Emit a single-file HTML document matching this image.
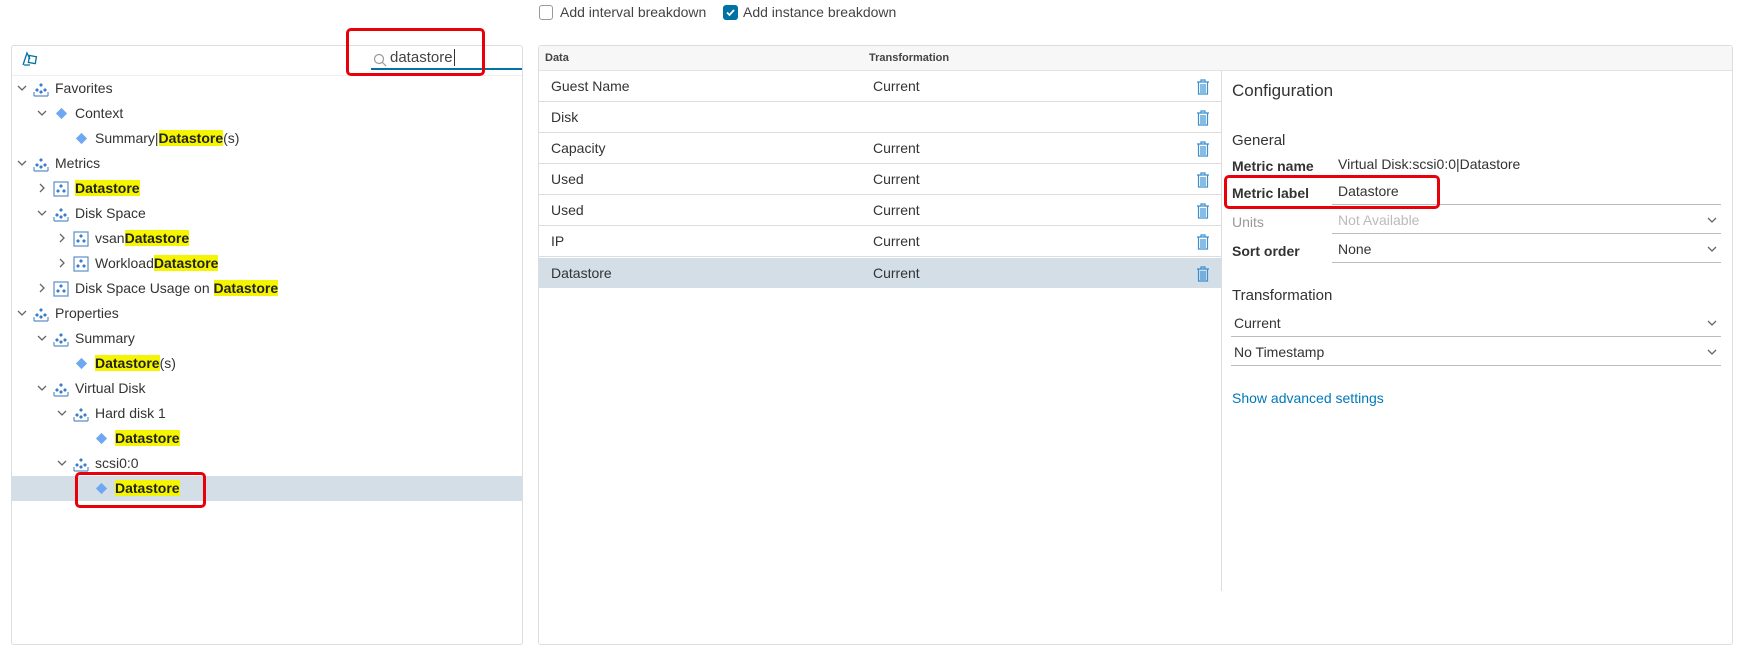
<!DOCTYPE html>
<html><head><meta charset="utf-8"><style>
*{margin:0;padding:0;box-sizing:border-box}
body{width:1747px;height:569px;background:#fff;font-family:"Liberation Sans",sans-serif;color:#333;font-size:14px;position:relative;overflow:hidden}
.a{position:absolute;white-space:nowrap}
.hl{background:#f5f500;font-weight:bold;color:#222}
.row{position:absolute;left:0;height:25px;line-height:25px;width:100%}
.chev{position:absolute;top:7px;width:10px;height:10px}
.ico{position:absolute;top:5px}
.red{position:absolute;border:3px solid #e8000b;border-radius:5px}
.trow{position:absolute;left:539px;width:682px;height:31px;border-bottom:1px solid #ddd;line-height:30px}
.trow span{position:absolute}
.lbl{position:absolute;font-weight:bold;font-size:14px;color:#333}
.und{position:absolute;border-bottom:1px solid #bbb;height:26px;line-height:24px;font-size:14px}
.dd{position:absolute;right:4px;top:7px}
</style></head><body>

<div class="a" style="left:539px;top:5px;width:14px;height:15px;border:1px solid #999;border-radius:3px"></div>
<div class="a" style="left:560px;top:4px;font-size:14px;color:#444">Add interval breakdown</div>
<div class="a" style="left:723px;top:5px;width:15px;height:15px;background:#0072a3;border-radius:3px"><svg width="15" height="15"><path d="M4 7.5l2.5 2.5 4.5-5" stroke="#fff" stroke-width="1.8" fill="none"/></svg></div>
<div class="a" style="left:743px;top:4px;font-size:14px;color:#444">Add instance breakdown</div>

<div class="a" style="left:11px;top:45px;width:512px;height:600px;border:1px solid #ddd;border-radius:3px"></div>
<div class="a" style="left:12px;top:75px;width:510px;height:1px;background:#eee"></div>
<svg class="a" style="left:21px;top:51px" width="17" height="16"><path d="M2 14 L6 2 L9 8 M3 14h6" stroke="#0072a3" stroke-width="1.3" fill="none"/><rect x="8" y="5" width="7" height="7" stroke="#0072a3" stroke-width="1.3" fill="none" transform="rotate(10 11 8)"/></svg>
<svg class="a" style="left:373px;top:53px" width="14" height="14"><circle cx="6" cy="6" r="4.5" stroke="#999" fill="none" stroke-width="1.2"/><path d="M9.5 9.5l3.5 3.5" stroke="#999" stroke-width="1.2"/></svg>
<div class="a" style="left:390px;top:49px;font-size:15px;color:#444">datastore<span style="border-left:1px solid #333;margin-left:1px"></span></div>
<div class="a" style="left:371px;top:68px;width:151px;height:2px;background:#0072a3"></div>
<div class="red" style="left:346px;top:28px;width:139px;height:48px"></div>

<div class="a" style="left:12px;top:476px;width:510px;height:25px;background:#d3dee7"></div>

<svg width="0" height="0" style="position:absolute"><defs>
<symbol id="h" viewBox="0 0 16 16"><path d="M1 15h14M1 11v4M15 11v4" stroke="#5a8fc8" stroke-width="1.2" fill="none"/><path d="M8 2l2 2-2 2-2-2z M4 7l2 2-2 2-2-2z M12 7l2 2-2 2-2-2z M8 9l2 2-2 2-2-2z" fill="#3a7dd0"/></symbol>
<symbol id="b" viewBox="0 0 16 16"><rect x="1" y="1" width="14" height="14" stroke="#5a8fc8" stroke-width="1.2" fill="#fff"/><path d="M8 3l2 2-2 2-2-2z M5 8l2 2-2 2-2-2z M11 8l2 2-2 2-2-2z" fill="#3a7dd0"/></symbol>
<symbol id="d" viewBox="0 0 14 14"><path d="M7 1l6 6-6 6-6-6z" fill="#6ea8f2"/></symbol>
<symbol id="cd" viewBox="0 0 10 10"><path d="M1 3l4 4 4-4" stroke="#666" stroke-width="1.3" fill="none"/></symbol>
<symbol id="cr" viewBox="0 0 10 10"><path d="M3 1l4 4-4 4" stroke="#666" stroke-width="1.3" fill="none"/></symbol>
<symbol id="t" viewBox="0 0 14 16"><path d="M1 3h12M5 3V1h4v2M2.5 3v12h9V3M5 5v9M7 5v9M9 5v9" stroke="#3b8fd0" stroke-width="1.2" fill="none"/></symbol>
</defs></svg>

<div class="a" style="left:0;top:76px;width:520px">
 <div class="row" style="top:0"><svg class="chev" style="left:17px"><use href="#cd"/></svg><svg class="ico" style="left:33px" width="16" height="16"><use href="#h"/></svg><span class="a" style="left:55px">Favorites</span></div>
 <div class="row" style="top:25px"><svg class="chev" style="left:37px"><use href="#cd"/></svg><svg class="ico" style="left:55px;top:6px" width="13" height="13"><use href="#d"/></svg><span class="a" style="left:75px">Context</span></div>
 <div class="row" style="top:50px"><svg class="ico" style="left:75px;top:6px" width="13" height="13"><use href="#d"/></svg><span class="a" style="left:95px">Summary|<span class="hl">Datastore</span>(s)</span></div>
 <div class="row" style="top:75px"><svg class="chev" style="left:17px"><use href="#cd"/></svg><svg class="ico" style="left:33px" width="16" height="16"><use href="#h"/></svg><span class="a" style="left:55px">Metrics</span></div>
 <div class="row" style="top:100px"><svg class="chev" style="left:37px"><use href="#cr"/></svg><svg class="ico" style="left:53px" width="16" height="16"><use href="#b"/></svg><span class="a" style="left:75px"><span class="hl">Datastore</span></span></div>
 <div class="row" style="top:125px"><svg class="chev" style="left:37px"><use href="#cd"/></svg><svg class="ico" style="left:53px" width="16" height="16"><use href="#h"/></svg><span class="a" style="left:75px">Disk Space</span></div>
 <div class="row" style="top:150px"><svg class="chev" style="left:57px"><use href="#cr"/></svg><svg class="ico" style="left:73px" width="16" height="16"><use href="#b"/></svg><span class="a" style="left:95px">vsan<span class="hl">Datastore</span></span></div>
 <div class="row" style="top:175px"><svg class="chev" style="left:57px"><use href="#cr"/></svg><svg class="ico" style="left:73px" width="16" height="16"><use href="#b"/></svg><span class="a" style="left:95px">Workload<span class="hl">Datastore</span></span></div>
 <div class="row" style="top:200px"><svg class="chev" style="left:37px"><use href="#cr"/></svg><svg class="ico" style="left:53px" width="16" height="16"><use href="#b"/></svg><span class="a" style="left:75px">Disk Space Usage on <span class="hl">Datastore</span></span></div>
 <div class="row" style="top:225px"><svg class="chev" style="left:17px"><use href="#cd"/></svg><svg class="ico" style="left:33px" width="16" height="16"><use href="#h"/></svg><span class="a" style="left:55px">Properties</span></div>
 <div class="row" style="top:250px"><svg class="chev" style="left:37px"><use href="#cd"/></svg><svg class="ico" style="left:53px" width="16" height="16"><use href="#h"/></svg><span class="a" style="left:75px">Summary</span></div>
 <div class="row" style="top:275px"><svg class="ico" style="left:75px;top:6px" width="13" height="13"><use href="#d"/></svg><span class="a" style="left:95px"><span class="hl">Datastore</span>(s)</span></div>
 <div class="row" style="top:300px"><svg class="chev" style="left:37px"><use href="#cd"/></svg><svg class="ico" style="left:53px" width="16" height="16"><use href="#h"/></svg><span class="a" style="left:75px">Virtual Disk</span></div>
 <div class="row" style="top:325px"><svg class="chev" style="left:57px"><use href="#cd"/></svg><svg class="ico" style="left:73px" width="16" height="16"><use href="#h"/></svg><span class="a" style="left:95px">Hard disk 1</span></div>
 <div class="row" style="top:350px"><svg class="ico" style="left:95px;top:6px" width="13" height="13"><use href="#d"/></svg><span class="a" style="left:115px"><span class="hl">Datastore</span></span></div>
 <div class="row" style="top:375px"><svg class="chev" style="left:57px"><use href="#cd"/></svg><svg class="ico" style="left:73px" width="16" height="16"><use href="#h"/></svg><span class="a" style="left:95px">scsi0:0</span></div>
 <div class="row" style="top:400px"><svg class="ico" style="left:95px;top:6px" width="13" height="13"><use href="#d"/></svg><span class="a" style="left:115px"><span class="hl">Datastore</span></span></div>
</div>
<div class="red" style="left:75px;top:472px;width:131px;height:36px"></div>

<div class="a" style="left:538px;top:45px;width:1195px;height:600px;border:1px solid #ddd;border-radius:3px"></div>
<div class="a" style="left:539px;top:46px;width:1193px;height:25px;background:#f7f7f7;border-bottom:1px solid #e3e3e3"></div>
<div class="a" style="left:545px;top:52px;font-size:11px;font-weight:bold;color:#444">Data</div>
<div class="a" style="left:869px;top:52px;font-size:11px;font-weight:bold;color:#444">Transformation</div>
<div class="a" style="left:1221px;top:71px;width:1px;height:520px;background:#ddd"></div>

<div class="trow" style="top:71px"><span style="left:12px">Guest Name</span><span style="left:334px">Current</span><svg style="position:absolute;left:657px;top:8px" width="14" height="16"><use href="#t"/></svg></div>
<div class="trow" style="top:102px"><span style="left:12px">Disk</span><svg style="position:absolute;left:657px;top:8px" width="14" height="16"><use href="#t"/></svg></div>
<div class="trow" style="top:133px"><span style="left:12px">Capacity</span><span style="left:334px">Current</span><svg style="position:absolute;left:657px;top:8px" width="14" height="16"><use href="#t"/></svg></div>
<div class="trow" style="top:164px"><span style="left:12px">Used</span><span style="left:334px">Current</span><svg style="position:absolute;left:657px;top:8px" width="14" height="16"><use href="#t"/></svg></div>
<div class="trow" style="top:195px"><span style="left:12px">Used</span><span style="left:334px">Current</span><svg style="position:absolute;left:657px;top:8px" width="14" height="16"><use href="#t"/></svg></div>
<div class="trow" style="top:226px"><span style="left:12px">IP</span><span style="left:334px">Current</span><svg style="position:absolute;left:657px;top:8px" width="14" height="16"><use href="#t"/></svg></div>
<div class="trow" style="top:258px;background:#d3dee7;border-bottom:none;height:30px"><span style="left:12px">Datastore</span><span style="left:334px">Current</span><svg style="position:absolute;left:657px;top:8px" width="14" height="16"><use href="#t"/></svg></div>

<div class="a" style="left:1232px;top:81px;font-size:17px;color:#333">Configuration</div>
<div class="a" style="left:1232px;top:132px;font-size:15px;color:#333">General</div>
<div class="lbl" style="left:1232px;top:158px">Metric name</div>
<div class="a" style="left:1338px;top:156px;font-size:14px">Virtual Disk:scsi0:0|Datastore</div>
<div class="lbl" style="left:1232px;top:185px">Metric label</div>
<div class="und" style="left:1332px;top:179px;width:389px;padding-left:6px">Datastore</div>
<div class="lbl" style="left:1232px;top:214px;color:#999;font-weight:normal">Units</div>
<div class="und" style="left:1332px;top:208px;width:389px;padding-left:6px;color:#bbb">Not Available<svg class="dd" width="10" height="10"><use href="#cd"/></svg></div>
<div class="lbl" style="left:1232px;top:243px">Sort order</div>
<div class="und" style="left:1332px;top:237px;width:389px;padding-left:6px">None<svg class="dd" width="10" height="10"><use href="#cd"/></svg></div>
<div class="a" style="left:1232px;top:287px;font-size:15px">Transformation</div>
<div class="und" style="left:1231px;top:311px;width:490px;padding-left:3px">Current<svg class="dd" width="10" height="10"><use href="#cd"/></svg></div>
<div class="und" style="left:1231px;top:340px;width:490px;padding-left:3px">No Timestamp<svg class="dd" width="10" height="10"><use href="#cd"/></svg></div>
<div class="a" style="left:1232px;top:390px;font-size:14px;color:#0079b8">Show advanced settings</div>
<div class="red" style="left:1224px;top:175px;width:216px;height:34px"></div>

</body></html>
